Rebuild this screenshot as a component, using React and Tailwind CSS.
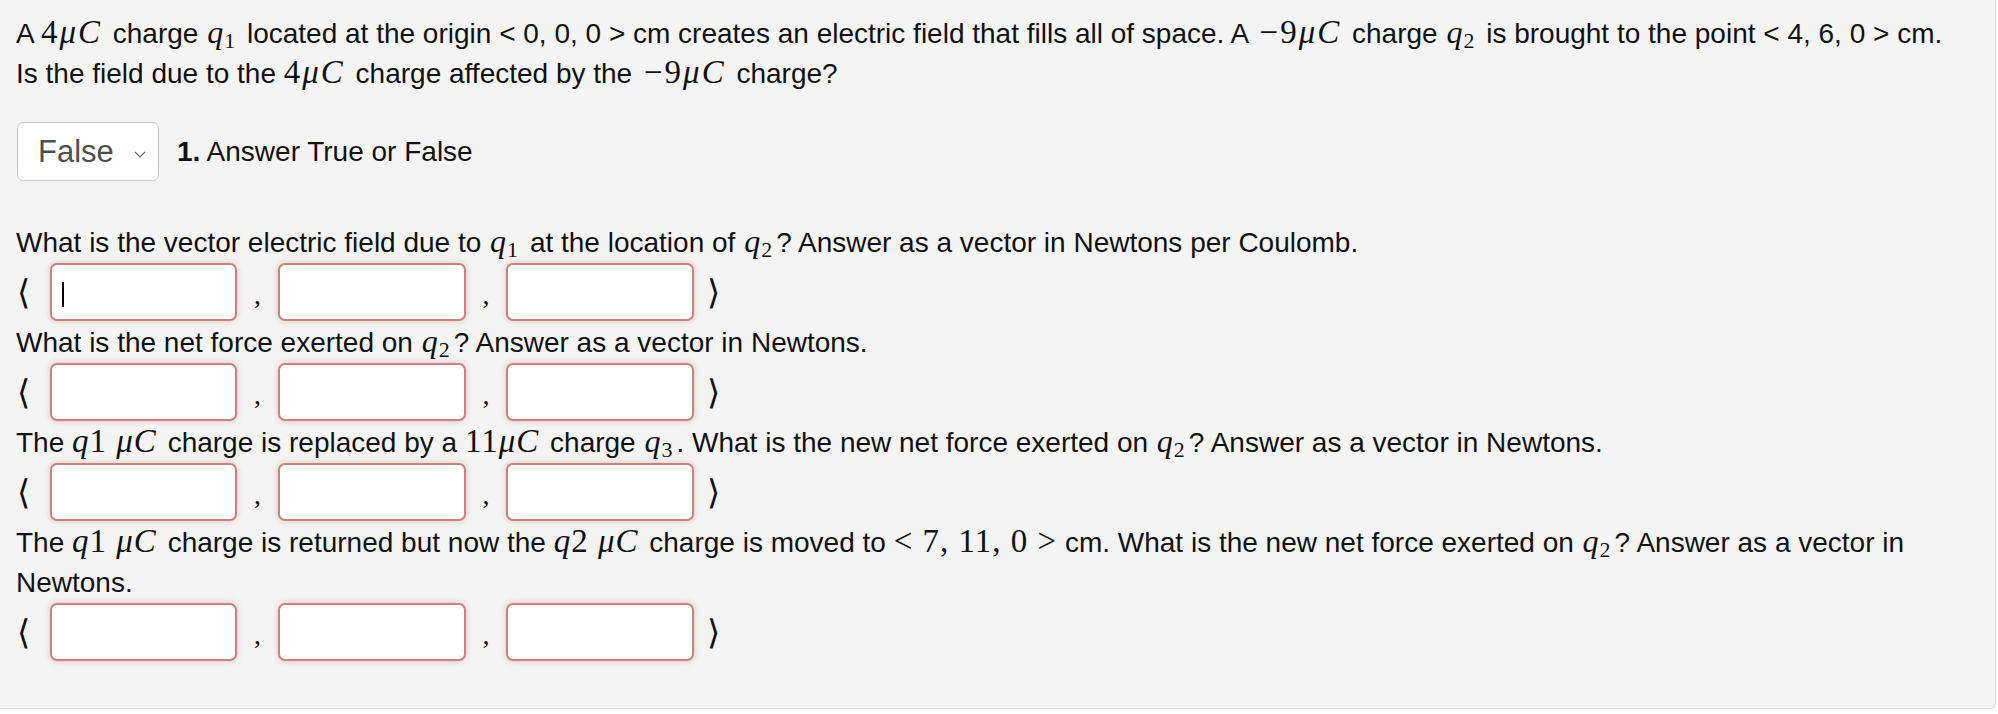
import React from "react";

const M = ({ children, wide }) => (
  <span
    className={`font-['Liberation_Serif',serif] text-[33px] leading-none ${wide ? "tracking-[2px]" : "tracking-[1px]"}`}
  >
    {children}
  </span>
);

const Q = ({ n }) => (
  <span className="font-['Liberation_Serif',serif] text-[32px] leading-none ml-[1px] mr-[4px]">
    <span className="italic">q</span>
    <span className="text-[22px] relative top-[5px] ml-[1px]">{n}</span>
  </span>
);

const UC = () => <span className="italic pr-[3px]">μC</span>;

const Minus = () => <span className="ml-[4px]">−</span>;

const Box = ({ w, cursor }) => (
  <div
    className={`${w} h-[58px] bg-white border-2 border-[#c8827f] rounded-[7px] shadow-[0_0_6px_rgba(200,110,110,0.4)] flex items-center pl-[10px]`}
  >
    {cursor ? <span className="block w-[2px] h-[25px] bg-black mt-[4px]" /> : null}
  </div>
);

const Bracket = ({ children, cls }) => (
  <span className={`${cls} font-['DejaVu_Sans',sans-serif] text-[34px] font-extralight leading-none`}>{children}</span>
);

const VecRow = ({ cursor }) => (
  <div className="flex items-center h-[58px] mb-[2px]">
    <Bracket cls="w-[34px] pl-[1px]">⟨</Bracket>
    <Box w="w-[187px]" cursor={cursor} />
    <span className="w-[41px] text-center font-['Liberation_Serif',serif] text-[28px] mt-[6px]">,</span>
    <Box w="w-[188px]" />
    <span className="w-[40px] text-center font-['Liberation_Serif',serif] text-[28px] mt-[6px]">,</span>
    <Box w="w-[188px]" />
    <Bracket cls="pl-[13px]">⟩</Bracket>
  </div>
);

export default function App() {
  return (
    <div className="min-h-[714px] bg-white">
      <div className="w-[1996px] h-[709px] bg-[#f4f4f4] border-r border-b border-[#d8d8d8] rounded-br-[6px] pl-[16px] pt-[14px] text-[28px] leading-[40px] text-[#111] font-['Liberation_Sans',Arial,sans-serif]">
        <p className="whitespace-nowrap">
          A{" "}
          <M wide>
            4<UC />
          </M>{" "}
          charge <Q n="1" /> located at the origin &lt; 0, 0, 0 &gt; cm creates an electric field that fills all of space. A{" "}
          <M wide>
            <Minus />9<UC />
          </M>{" "}
          charge <Q n="2" /> is brought to the point &lt; 4, 6, 0 &gt; cm.
          <br />
          Is the field due to the{" "}
          <M wide>
            4<UC />
          </M>{" "}
          charge affected by the{" "}
          <M wide>
            <Minus />9<UC />
          </M>{" "}
          charge?
        </p>

        <div className="mt-[28px] flex items-center">
          <div className="ml-[1px] w-[142px] h-[59px] bg-white border border-[#cacaca] rounded-[6px] flex items-center pl-[20px]">
            <span className="text-[31px] text-[#4f4f4f]">False</span>
            <svg className="ml-auto mr-[12px] mt-[5px]" width="12" height="7" viewBox="0 0 12 7" fill="none">
              <polyline points="1,1 6,6 11,1" stroke="#6a6a6a" strokeWidth="1.2" />
            </svg>
          </div>
          <span className="ml-[18px]">
            <b>1.</b> Answer True or False
          </span>
        </div>

        <div className="mt-[42px] whitespace-nowrap">
          What is the vector electric field due to <Q n="1" /> at the location of <Q n="2" />? Answer as a vector in Newtons per Coulomb.
        </div>
        <VecRow cursor />

        <div className="whitespace-nowrap">
          What is the net force exerted on <Q n="2" />? Answer as a vector in Newtons.
        </div>
        <VecRow />

        <div className="whitespace-nowrap">
          The{" "}
          <M>
            <span className="italic">q</span>1 <UC />
          </M>{" "}
          charge is replaced by a{" "}
          <M>
            11<UC />
          </M>{" "}
          charge <Q n="3" />. What is the new net force exerted on <Q n="2" />? Answer as a vector in Newtons.
        </div>
        <VecRow />

        <div className="whitespace-nowrap">
          The{" "}
          <M>
            <span className="italic">q</span>1 <UC />
          </M>{" "}
          charge is returned but now the{" "}
          <M>
            <span className="italic">q</span>2 <UC />
          </M>{" "}
          charge is moved to{" "}
          <M>&lt; 7, 11, 0 &gt;</M>{" "}
          cm. What is the new net force exerted on <Q n="2" />? Answer as a vector in
          <br />
          Newtons.
        </div>
        <VecRow />
      </div>
    </div>
  );
}
